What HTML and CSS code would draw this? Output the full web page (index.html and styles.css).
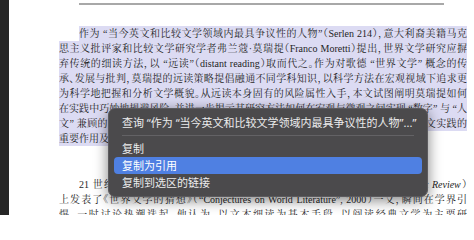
FILE: index.html
```html
<!DOCTYPE html>
<html lang="zh">
<head>
<meta charset="utf-8">
<link rel="stylesheet" href="styles.css">
</head>
<body>
<div class="viewer">
  <div class="sidebar"></div>
  <div class="page">
    <div class="rule"></div>
    <div class="para sel">
      <div class="ln hl first">作为 “当今英文和比较文学领域内最具争议性的人物”（Serlen 214），意大利裔美籍马克</div>
      <div class="ln hl">思主义批评家和比较文学研究学者弗兰蔻·莫瑞提（Franco Moretti）提出，世界文学研究应摒</div>
      <div class="ln hl">弃传统的细读方法，以 “远读”（distant reading）取而代之。作为对歌德 “世界文学” 概念的传</div>
      <div class="ln hl">承、发展与批判，莫瑞提的远读策略提倡融通不同学科知识，以科学方法在宏观视域下追求更</div>
      <div class="ln hl">为科学地把握和分析文学概貌。从远读本身固有的风险属性入手，本文试图阐明莫瑞提如何</div>
      <div class="ln hl">在实践中巧妙地规避风险，并进一步揭示其研究方法如何在宏观与微观之间实现 “数字” 与 “人</div>
      <div class="ln hl">文” 兼顾的均衡路径与具体方法，进而探讨远读方法在当代世界文学研究及数字人文实践的</div>
      <div class="ln last"><span class="hl">重要作用及意义。</span></div>
    </div>
    <div class="para">
      <div class="ln first">21 世纪伊始，弗兰蔻·莫瑞提在英国著名左翼期刊《新左派评论》（<i>New Left Review</i>）</div>
      <div class="ln">上发表了《世界文学的猜想》（“Conjectures on World Literature”, 2000）一文，瞬间在学界引</div>
      <div class="ln">爆，一时讨论热潮迭起。他认为，以文本细读为基本手段、以阅读经典文学为主要研</div>
    </div>

    <div class="menu">
      <div class="item">查询 “作为 “当今英文和比较文学领域内最具争议性的人物”...”</div>
      <div class="sep"></div>
      <div class="item">复制</div>
      <div class="item active">复制为引用</div>
      <div class="item">复制到选区的链接</div>
    </div>
  </div>
</div>
</body>
</html>
```
FILE: styles.css
```css
html, body {
  margin: 0;
  padding: 0;
  background: #ffffff;
  overflow: hidden;
}

.viewer {
  display: flex;
  width: 474px;
  height: 215px;
}

.sidebar {
  width: 9px;
  flex: none;
  background: #262626;
}

.page {
  position: relative;
  flex: 1;
  padding-top: 3px;
  background: #ffffff;
}

.rule {
  margin-left: 70px;
  width: 365px;
  height: 2px;
  background: #a8a8a8;
}

.para {
  margin-left: 50px;
  width: 408px;
  margin-top: 21px;
  font-family: "Liberation Serif", "Noto Serif CJK SC", "Noto Sans CJK SC", serif;
  font-size: 10px;
  line-height: 15px;
  color: #1f1f1f;
  font-feature-settings: "halt";
}

.para + .para {
  margin-top: 31px;
}

.ln {
  height: 15px;
  overflow: hidden;
  text-align: justify;
  text-align-last: justify;
}

.ln.first {
  margin-left: 20px;
}

.ln.last {
  text-align: left;
  text-align-last: left;
}

.hl {
  background: #dcdbf3;
}

.ln.last .hl {
  display: inline-block;
  height: 15px;
}

.menu {
  position: absolute;
  left: 99px;
  top: 108px;
  width: 308px;
  padding: 5px;
  border-radius: 7px;
  background: #4b4a4c;
  border: 1px solid #5c5b5e;
  box-shadow: 0 3px 14px rgba(0, 0, 0, 0.5);
  font-family: "Noto Sans", "Noto Sans CJK SC", sans-serif;
  font-size: 11px;
  color: #ececec;
}

.item {
  height: 17px;
  line-height: 17px;
  padding-left: 8px;
  border-radius: 4px;
  white-space: nowrap;
}

.item.active {
  background: #4f80e2;
  color: #ffffff;
}

.sep {
  height: 1px;
  margin: 4px 8px;
  background: #636265;
}
```
